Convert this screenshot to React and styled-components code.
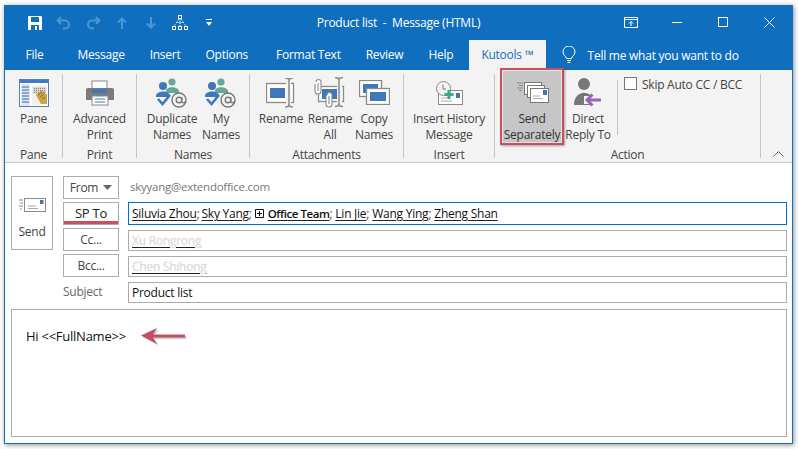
import styled, { createGlobalStyle } from "styled-components";

const Global = createGlobalStyle`
  html, body { margin: 0; padding: 0; background: #fff; }
  * { box-sizing: border-box; }
`;

const Page = styled.div`
  width: 798px;
  height: 449px;
  padding: 5px 5px 5px 4px;
  overflow: hidden;
  font-family: "Open Sans", "Liberation Sans", sans-serif;
  font-size: 12px;
  letter-spacing: -0.25px;
  color: #444;
`;

const Win = styled.div`
  height: 439px;
  border: 1px solid #106ebe;
  border-top: 0;
  background: #fff;
  display: flex;
  flex-direction: column;
  box-shadow: 1px 1px 5px rgba(0, 0, 0, 0.45);
`;

const TitleBar = styled.div`
  height: 35px;
  background: #106ebe;
  display: flex;
  align-items: center;
  position: relative;
  color: #fff;
`;

const Quick = styled.div`
  display: flex;
  align-items: center;
  padding-left: 15px;
`;

const QuickBtn = styled.div`
  width: 29px;
  height: 30px;
  display: flex;
  align-items: center;
  justify-content: center;
`;

const Title = styled.div`
  position: absolute;
  left: 0;
  right: 0;
  top: 10px;
  text-align: center;
  font-size: 12px;
  line-height: 16px;
  white-space: pre;
`;

const Controls = styled.div`
  margin-left: auto;
  display: flex;
`;

const Ctl = styled.div`
  width: 46px;
  height: 30px;
  display: flex;
  align-items: center;
  justify-content: center;
`;

const TabRow = styled.div`
  height: 30px;
  background: #106ebe;
  display: flex;
  align-items: stretch;
  padding-left: 8px;
  color: #fff;
`;

const Tab = styled.div`
  padding: 0 ${(p) => p.$pad || 12.5}px;
  margin-right: ${(p) => p.$after || 0}px;
  line-height: 30px;
  background: ${(p) => (p.$active ? "#f3f3f3" : "transparent")};
  color: ${(p) => (p.$active ? "#106ebe" : "#fff")};
  white-space: nowrap;
  flex: none;
`;

const TellMe = styled.div`
  display: flex;
  align-items: center;
  gap: 12px;
  margin-left: 16px;
  white-space: nowrap;
`;

const Ribbon = styled.div`
  height: 93px;
  background: #f3f3f3;
  border-bottom: 1px solid #c8c8c8;
  padding-top: 4px;
  display: flex;
  position: relative;
`;

const Group = styled.div`
  width: ${(p) => p.$w}px;
  height: 84px;
  border-right: 1px solid #c6c6c6;
  flex: none;
  display: flex;
  flex-direction: column;
`;

const GroupBody = styled.div`
  height: 72px;
  display: flex;
  padding-left: ${(p) => p.$left || 0}px;
`;

const GroupLabel = styled.div`
  height: 12px;
  line-height: 18px;
  text-align: center;
  color: #444;
  white-space: nowrap;
`;

const RibbonBtn = styled.div`
  width: ${(p) => p.$w}px;
  height: 72px;
  flex: none;
  display: flex;
  flex-direction: column;
  align-items: center;
  text-align: center;
  line-height: 16px;
  white-space: nowrap;
`;

const SelectedBtn = styled(RibbonBtn)`
  height: 77px;
  margin-top: -6px;
  padding-top: 4px;
  background: #c6c6c6;
  border: 2px solid #c9505f;
  outline: 1px solid rgba(255, 255, 255, 0.5);
  outline-offset: -3px;
  box-shadow: 1px 1px 2px rgba(0, 0, 0, 0.35);
  color: #333;
`;

const IconSlot = styled.div`
  height: 37px;
  flex: none;
  display: flex;
  align-items: center;
  justify-content: center;
`;

const ActionSide = styled.div`
  height: 55px;
  margin: 6px 0 0 5px;
  border-left: 1px solid #c6c6c6;
  padding-left: 6px;
`;

const SkipRow = styled.div`
  margin-top: -3px;
  display: flex;
  gap: 5px;
  align-items: flex-start;
  white-space: nowrap;
  line-height: 16px;
`;

const Check = styled.span`
  width: 13px;
  height: 13px;
  background: #fff;
  border: 1px solid #777;
  flex: none;
`;

const Collapse = styled.svg`
  position: absolute;
  right: 8px;
  bottom: 5px;
`;

const Form = styled.div`
  flex: 1;
  padding: 13px 5px 6px 6px;
  display: flex;
  flex-direction: column;
`;

const Head = styled.div`
  display: flex;
  gap: 10px;
`;

const SendBox = styled.div`
  width: 42px;
  height: 74px;
  border: 1px solid #ababab;
  flex: none;
  display: flex;
  flex-direction: column;
  align-items: center;
  padding-top: 21px;
  gap: 12px;
  line-height: 16px;
`;

const Rows = styled.div`
  flex: 1;
  min-width: 0;
`;

const Row = styled.div`
  height: ${(p) => p.$h || 26}px;
  display: flex;
  gap: 9px;
  align-items: flex-start;
`;

const FieldBtn = styled.div`
  width: 56px;
  height: 23px;
  flex: none;
  border: 1px solid #ababab;
  display: flex;
  align-items: center;
  justify-content: center;
  gap: 5px;
  color: ${(p) => (p.$mark ? "#222" : "#444")};
  font-size: ${(p) => (p.$mark ? 13 : 12)}px;
  box-shadow: ${(p) => (p.$mark ? "inset 0 -3px 0 #c9505f" : "none")};
  padding-bottom: ${(p) => (p.$mark ? 2 : 0)}px;
`;

const FromText = styled.div`
  color: #777;
  font-size: 11.5px;
  line-height: 22px;
  padding-left: 2px;
`;

const SubjectLabel = styled.div`
  width: 56px;
  flex: none;
  margin-top: 2px;
  line-height: 20px;
  color: #666;
`;

const Field = styled.div`
  flex: 1;
  height: ${(p) => p.$h || 21}px;
  margin-top: ${(p) => p.$drop || 0}px;
  border: 1px solid ${(p) => (p.$focus ? "#0072c6" : "#ababab")};
  padding: 0 3px;
  display: flex;
  align-items: center;
  color: #111;
  white-space: nowrap;
`;

const Person = styled.span`
  color: #111;
  text-decoration: underline;
  text-decoration-color: #222;
  text-underline-offset: 2px;
  ${(p) => p.$bold && "font-weight: 600; font-size: 11.5px; letter-spacing: -0.45px;"}
`;

const FadedPerson = styled(Person)`
  color: #dcdcdc;
  text-shadow: 0 0 1px #e4e4e4;
`;

const Sep = styled.span`
  margin-right: ${(p) => p.$gap || 3}px;
  color: #555;
`;

const Plus = styled.svg`
  margin: 0 4px 0 1px;
  flex: none;
`;

const Body = styled.div`
  flex: 1;
  margin-top: 6px;
  border: 1px solid #ababab;
  padding: 17px 14px;
  display: flex;
  color: #111;
  font-size: 13px;
  line-height: 16px;
`;

const BodyLine = styled.div`
  height: 18px;
  display: flex;
  align-items: center;
  gap: 14px;
`;

const Save = () => (
  <svg width="16" height="16" viewBox="0 0 16 16">
    <path fill="#fff" d="M1 1h13l1 1v13H1z" />
    <rect x="4" y="2" width="8" height="5" fill="#106ebe" />
    <rect x="4" y="10" width="8" height="5" fill="#106ebe" />
    <rect x="8" y="11" width="2" height="4" fill="#fff" />
  </svg>
);

const Arc = ({ flip }) => (
  <svg width="16" height="14" viewBox="0 0 16 14" style={flip ? { transform: "scaleX(-1)" } : undefined}>
    <path d="M5 1 1.500 4.500 5 8M2 4.500h7a4 4 0 0 1 0 8H7" fill="none" stroke="#4a97d6" strokeWidth="2" />
  </svg>
);

const Vert = ({ down }) => (
  <svg width="10" height="12" viewBox="0 0 10 12" style={down ? { transform: "scaleY(-1)" } : undefined}>
    <path d="M5 12V2M1 5.500 5 1.500l4 4" fill="none" stroke="#4a97d6" strokeWidth="2" />
  </svg>
);

const Tree = () => (
  <svg width="16" height="15" viewBox="0 0 16 15" fill="none" stroke="#fff">
    <rect x="6.500" y="0.500" width="3" height="3" />
    <rect x="0.500" y="11.500" width="3" height="3" />
    <rect x="6.500" y="11.500" width="3" height="3" />
    <rect x="12.500" y="11.500" width="3" height="3" />
    <path d="M7 4 2 11M8 4v7M9 4l5 7M4.500 7.500h7" strokeDasharray="1 1" />
  </svg>
);

const More = () => (
  <svg width="8" height="8" viewBox="0 0 8 8">
    <rect x="1" y="0" width="6" height="1" fill="#fff" />
    <path d="M1 3h6L4 7z" fill="#fff" />
  </svg>
);

const RibbonDisplay = () => (
  <svg width="14" height="12" viewBox="0 0 14 12" fill="none" stroke="#fff">
    <path d="M.5.500h13v10H.5zM.5 2.500h13" />
    <path d="M7 9V4.500M5 6.500l2-2 2 2" />
  </svg>
);

const Min = () => (
  <svg width="11" height="2" viewBox="0 0 11 2"><rect width="10" height="1" fill="#fff" /></svg>
);

const Max = () => (
  <svg width="11" height="11" viewBox="0 0 11 11"><rect x=".5" y=".5" width="9" height="9" fill="none" stroke="#fff" /></svg>
);

const Close = () => (
  <svg width="11" height="11" viewBox="0 0 11 11"><path d="M.5.500l10 10M10.500.500l-10 10" stroke="#fff" fill="none" /></svg>
);

const Bulb = () => (
  <svg width="14" height="18" viewBox="0 0 14 18" fill="none" stroke="#fff">
    <path d="M4.500 12.500C4 10 1 9 1 6a6 6 0 0 1 12 0c0 3-3 4-3.500 6.500zM5 14.500h4M5.500 16.500h3" />
  </svg>
);

const PaneIcon = () => (
  <svg width="30" height="28" viewBox="0 0 30 28">
    <rect x=".5" y=".5" width="29" height="27" fill="#fff" stroke="#5b7fa8" />
    <rect x="1" y="1" width="28" height="3" fill="#3f7cc4" />
    <rect x="2" y="5" width="9" height="22" fill="#dfe9f5" />
    <path d="M3 8h7M3 11h7M3 14h7M3 17h7M3 20h7M3 23h7" stroke="#3a63a8" />
    <rect x="13" y="6" width="15" height="20" fill="#f2f2ea" />
    <path d="M14 8h13v7H14z" fill="#d8d8d0" />
    <path d="M15 9.500h11M15 11.500h11M15 13.500h11" stroke="#888" strokeDasharray="1 1" />
    <path d="M17 16l6-5 5 5v9h-6z" fill="#c9a64a" />
    <path d="M19 16l4-3M21 18l4-3M23 20l3-2" stroke="#8a6d1f" />
  </svg>
);

const Printer = () => (
  <svg width="30" height="26" viewBox="0 0 30 26">
    <rect x="7" y="1" width="15" height="9" fill="#fff" stroke="#888" />
    <path d="M3 8h24a2 2 0 0 1 2 2v10H1V10a2 2 0 0 1 2-2z" fill="#7b7b7b" />
    <rect x="7" y="9" width="15" height="4" fill="#3f78b8" />
    <rect x="7" y="16" width="16" height="9" fill="#fff" stroke="#888" />
    <path d="M10 19h10M10 22h10" stroke="#3f78b8" />
  </svg>
);

const NamesIcon = () => (
  <svg width="32" height="30" viewBox="0 0 32 30">
    <circle cx="16" cy="4" r="3.600" fill="#66a896" />
    <path d="M10 13c0-5 12-5 13 0v2H10z" fill="#66a896" />
    <circle cx="7" cy="8" r="4" fill="#3f78b8" />
    <path d="M0 18c0-6 14-6 14 0v1H0z" fill="#3f78b8" />
    <path d="M2 21l4.500 5L14 17" fill="none" stroke="#3f78b8" strokeWidth="2.600" />
    <circle cx="23" cy="22" r="7" fill="#f3f3f3" stroke="#777" strokeWidth="1.400" />
    <circle cx="23" cy="22" r="2.800" fill="none" stroke="#777" strokeWidth="1.400" />
    <path d="M25.800 19v4.500c0 2 3 2 4-.5" fill="none" stroke="#777" strokeWidth="1.300" />
  </svg>
);

const Cursor = () => (
  <path d="M-4 .5c3 0 4 1 4 2.500v24c0 1.500-1 2.500-4 2.500M4 .5c-3 0-4 1-4 2.500v24c0 1.500 1 2.500 4 2.500" fill="none" stroke="#8a8a8a" strokeWidth="1.500" />
);

const RenameIcon = () => (
  <svg width="30" height="30" viewBox="0 0 30 30">
    <rect x=".5" y="5.500" width="27" height="19" fill="#fff" stroke="#8a8a8a" strokeWidth="1.300" />
    <rect x="4" y="10" width="15" height="10" fill="#3f78b8" />
    <rect x="20" y="3" width="5" height="24" fill="#f3f3f3" />
    <g transform="translate(23 -0.500)"><Cursor /></g>
  </svg>
);

const Clip = ({ x, y }) => (
  <path transform={`translate(${x} ${y})`} d="M1 4a2.500 2.500 0 0 1 5 0v9a3 3 0 0 1-6 0V6M3 5v8" fill="#fff" stroke="#8a8a8a" strokeWidth="1.100" />
);

const RenameAllIcon = () => (
  <svg width="32" height="31" viewBox="0 0 32 31">
    <rect x="4.500" y="9.500" width="25" height="15" fill="#fff" stroke="#8a8a8a" strokeWidth="1.300" />
    <rect x="8" y="12" width="15" height="10" fill="#3f78b8" />
    <rect x="23" y="4" width="5" height="24" fill="#f3f3f3" />
    <g transform="translate(25 0)"><Cursor /></g>
    <Clip x={1} y={1} />
    <Clip x={12} y={14} />
  </svg>
);

const CopyIcon = () => (
  <svg width="31" height="25" viewBox="0 0 31 25">
    <rect x=".5" y=".5" width="22" height="16" fill="#fff" stroke="#8a8a8a" strokeWidth="1.300" />
    <rect x="4" y="4" width="15" height="9" fill="#3f78b8" />
    <rect x="7.500" y="8.500" width="23" height="16" fill="#fff" stroke="#8a8a8a" strokeWidth="1.300" />
    <rect x="11" y="12" width="16" height="9" fill="#3f78b8" />
  </svg>
);

const HistoryIcon = () => (
  <svg width="27" height="24" viewBox="0 0 27 24">
    <rect x="2.500" y="9.500" width="24" height="14" fill="#fff" stroke="#8a8a8a" />
    <rect x="20" y="12" width="4" height="5" fill="#3f78b8" />
    <path d="M5 17h7M5 20h11" stroke="#aaa" />
    <circle cx="7.500" cy="7.500" r="7" fill="#f3f3f3" stroke="#8a8a8a" />
    <path d="M7 3.500v4.500h3" fill="none" stroke="#777" />
    <path d="M13 9v9M8.500 13.500h9" stroke="#3ba88a" strokeWidth="3" />
  </svg>
);

const Stack = () => (
  <svg width="33" height="21" viewBox="0 0 33 21">
    <path d="M1 1h6M3 3.500h4M1 6h6M3 8.500h3" stroke="#8a8a8a" />
    <rect x="8.500" y=".5" width="17" height="12" fill="#fff" stroke="#777" />
    <rect x="11.500" y="3.500" width="17" height="12" fill="#fff" stroke="#777" />
    <rect x="14.500" y="6.500" width="18" height="14" fill="#fff" stroke="#777" />
    <rect x="27" y="8" width="4" height="5" fill="#3f78b8" />
    <path d="M17 14h7M17 16.500h10" stroke="#aaa" />
  </svg>
);

const Direct = () => (
  <svg width="28" height="30" viewBox="0 0 28 30">
    <circle cx="10" cy="6" r="6" fill="#777" />
    <path d="M0 27c0-16 20-16 20 -1l-6 1z" fill="#777" />
    <path d="M10 22h18" stroke="#f3f3f3" strokeWidth="8" />
    <path d="M27 22H13M18.500 16.500 13 22l5.500 5.500" fill="none" stroke="#9b62b8" strokeWidth="3" />
  </svg>
);

const Envelope = () => (
  <svg width="27" height="14" viewBox="0 0 27 14">
    <path d="M0 2h4M1 5h3M0 8h4M1 11h2" stroke="#8a8a8a" />
    <rect x="5.500" y=".5" width="21" height="13" fill="#fff" stroke="#8a8a8a" />
    <rect x="21" y="2" width="3.500" height="4" fill="#3f78b8" />
    <path d="M9 8h8M9 10.500h10" stroke="#aaa" />
  </svg>
);

const RedArrow = () => (
  <svg width="48" height="19" viewBox="0 0 48 19">
    <path d="M1 8.500 17 1l-4 6.500h32v3H13l4 6.500z" fill="#000" opacity=".2" transform="translate(1.500 1.500)" />
    <path d="M1 8.500 17 1l-4 6.500h32v3H13l4 6.500z" fill="#c0505f" />
  </svg>
);

export default function App() {
  return (
    <>
      <Global />
      <Page>
        <Win>
          <TitleBar>
            <Quick>
              <QuickBtn><Save /></QuickBtn>
              <QuickBtn><Arc /></QuickBtn>
              <QuickBtn><Arc flip /></QuickBtn>
              <QuickBtn><Vert /></QuickBtn>
              <QuickBtn><Vert down /></QuickBtn>
              <QuickBtn><Tree /></QuickBtn>
              <QuickBtn><More /></QuickBtn>
            </Quick>
            <Title>Product list  -  Message (HTML)</Title>
            <Controls>
              <Ctl><RibbonDisplay /></Ctl>
              <Ctl><Min /></Ctl>
              <Ctl><Max /></Ctl>
              <Ctl><Close /></Ctl>
            </Controls>
          </TitleBar>
          <TabRow>
            <Tab $after={9}>File</Tab>
            <Tab>Message</Tab>
            <Tab>Insert</Tab>
            <Tab $after={3}>Options</Tab>
            <Tab>Format Text</Tab>
            <Tab>Review</Tab>
            <Tab $after={3.5}>Help</Tab>
            <Tab $active $pad={12}>Kutools ™</Tab>
            <TellMe><Bulb />Tell me what you want to do</TellMe>
          </TabRow>
          <Ribbon>
            <Group $w={58}>
              <GroupBody>
                <RibbonBtn $w={57}><IconSlot><PaneIcon /></IconSlot>Pane</RibbonBtn>
              </GroupBody>
              <GroupLabel>Pane</GroupLabel>
            </Group>
            <Group $w={74}>
              <GroupBody>
                <RibbonBtn $w={73}><IconSlot><Printer /></IconSlot>Advanced<br />Print</RibbonBtn>
              </GroupBody>
              <GroupLabel>Print</GroupLabel>
            </Group>
            <Group $w={113}>
              <GroupBody $left={7}>
                <RibbonBtn $w={56}><IconSlot><NamesIcon /></IconSlot>Duplicate<br />Names</RibbonBtn>
                <RibbonBtn $w={42}><IconSlot><NamesIcon /></IconSlot>My<br />Names</RibbonBtn>
              </GroupBody>
              <GroupLabel>Names</GroupLabel>
            </Group>
            <Group $w={154}>
              <GroupBody $left={6}>
                <RibbonBtn $w={50}><IconSlot><RenameIcon /></IconSlot>Rename</RibbonBtn>
                <RibbonBtn $w={48}><IconSlot><RenameAllIcon /></IconSlot>Rename<br />All</RibbonBtn>
                <RibbonBtn $w={40}><IconSlot><CopyIcon /></IconSlot>Copy<br />Names</RibbonBtn>
              </GroupBody>
              <GroupLabel>Attachments</GroupLabel>
            </Group>
            <Group $w={91}>
              <GroupBody>
                <RibbonBtn $w={90}><IconSlot><HistoryIcon /></IconSlot>Insert History<br />Message</RibbonBtn>
              </GroupBody>
              <GroupLabel>Insert</GroupLabel>
            </Group>
            <Group $w={266}>
              <GroupBody $left={5}>
                <SelectedBtn $w={64}><IconSlot><Stack /></IconSlot>Send<br />Separately</SelectedBtn>
                <RibbonBtn $w={48}><IconSlot><Direct /></IconSlot>Direct<br />Reply To</RibbonBtn>
                <ActionSide><SkipRow><Check />Skip Auto CC / BCC</SkipRow></ActionSide>
              </GroupBody>
              <GroupLabel>Action</GroupLabel>
            </Group>
            <Collapse width="11" height="6" viewBox="0 0 11 6">
              <path d="M.5 5.500 5.500.5l5 5" fill="none" stroke="#666" />
            </Collapse>
          </Ribbon>
          <Form>
            <Head>
              <SendBox><Envelope />Send</SendBox>
              <Rows>
                <Row>
                  <FieldBtn>From
                    <svg width="9" height="5" viewBox="0 0 9 5"><path d="M0 0h9L4.500 5z" fill="#666" /></svg>
                  </FieldBtn>
                  <FromText>skyyang@extendoffice.com</FromText>
                </Row>
                <Row>
                  <FieldBtn $mark>SP To</FieldBtn>
                  <Field $focus $h={23}>
                    <Person>Siluvia Zhou</Person><Sep $gap={2}>;</Sep>
                    <Person>Sky Yang</Person><Sep $gap={2}>;</Sep>
                    <Plus width="9" height="9" viewBox="0 0 9 9">
                      <path d="M.5.500h8v8h-8zM4.500 2v5M2 4.500h5" fill="none" stroke="#111" />
                    </Plus>
                    <Person $bold>Office Team</Person><Sep>;</Sep>
                    <Person>Lin Jie</Person><Sep>;</Sep>
                    <Person>Wang Ying</Person><Sep>;</Sep>
                    <Person>Zheng Shan</Person>
                  </Field>
                </Row>
                <Row>
                  <FieldBtn>Cc...</FieldBtn>
                  <Field $drop={2}><FadedPerson>Xu Rongrong</FadedPerson></Field>
                </Row>
                <Row>
                  <FieldBtn>Bcc...</FieldBtn>
                  <Field $drop={2}><FadedPerson>Chen Shihong</FadedPerson></Field>
                </Row>
                <Row $h={23}>
                  <SubjectLabel>Subject</SubjectLabel>
                  <Field $drop={2}>Product list</Field>
                </Row>
              </Rows>
            </Head>
            <Body>
              <BodyLine>Hi &lt;&lt;FullName&gt;&gt;<RedArrow /></BodyLine>
            </Body>
          </Form>
        </Win>
      </Page>
    </>
  );
}
